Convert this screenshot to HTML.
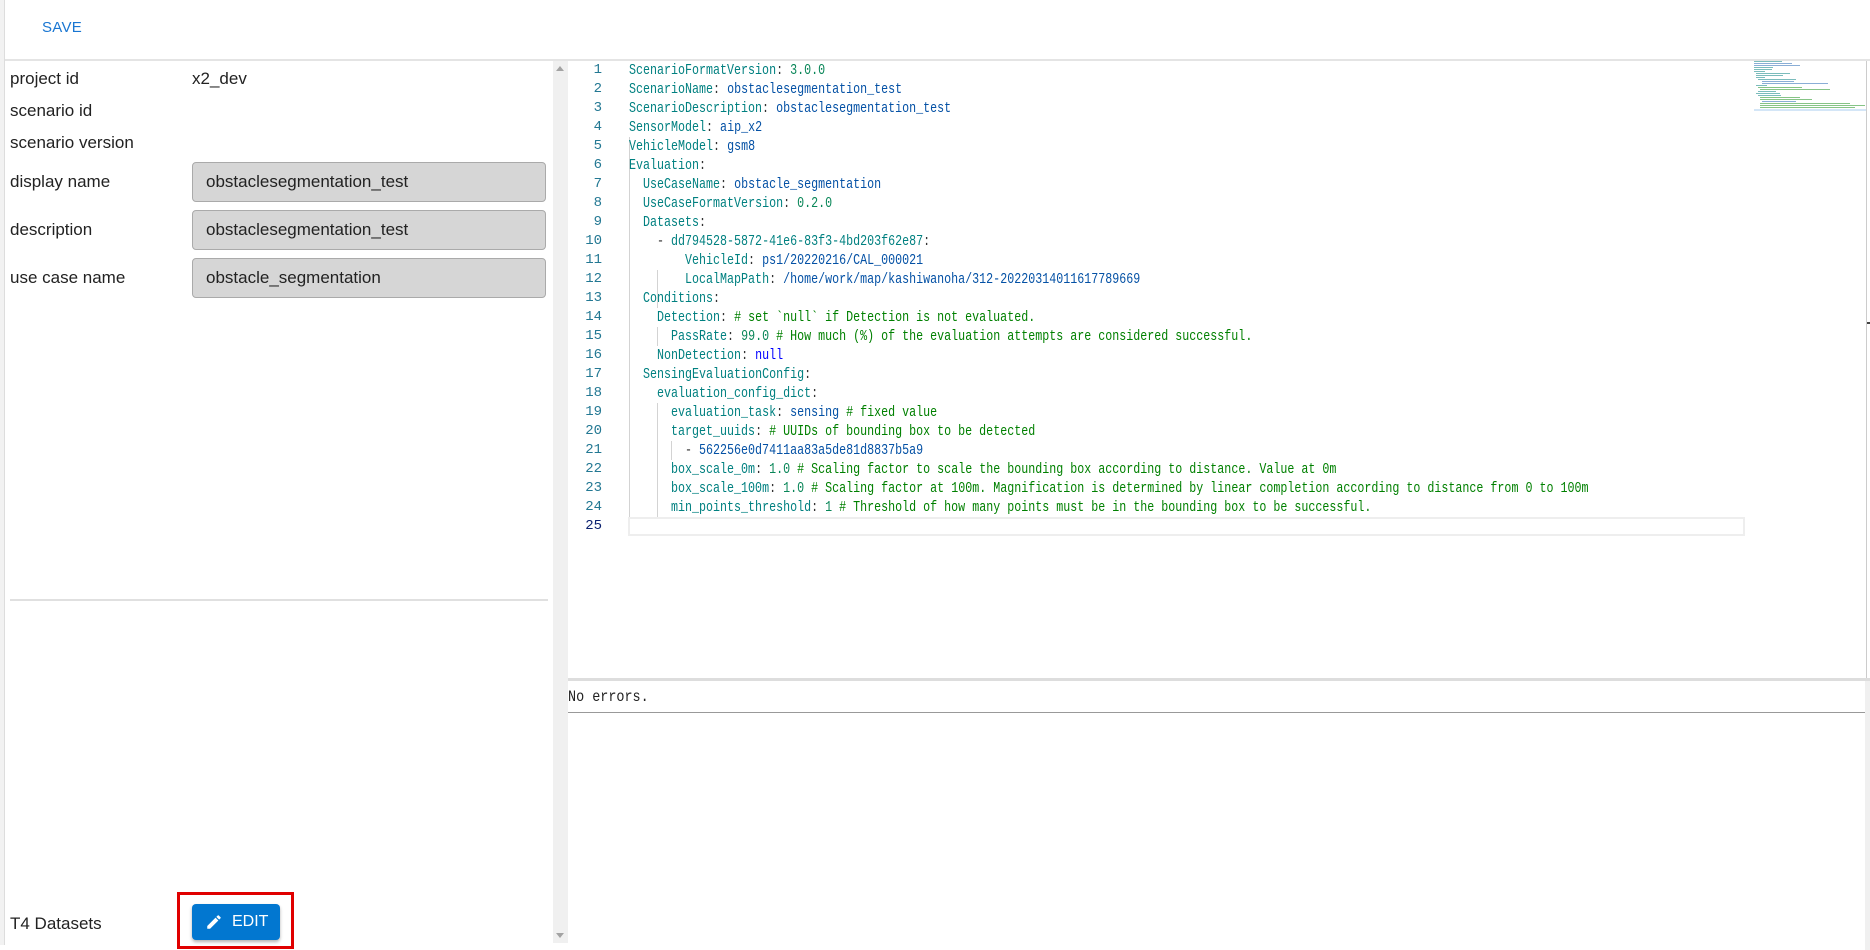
<!DOCTYPE html>
<html><head><meta charset="utf-8"><style>
*{margin:0;padding:0;box-sizing:border-box}
body{width:1870px;height:950px;position:relative;background:#fff;overflow:hidden;font-family:"Liberation Sans",sans-serif;color:#222}
.a{position:absolute}
.lbl{position:absolute;left:10px;font-size:17px;color:#222;line-height:20px}
.inp{position:absolute;left:192px;width:354px;height:40px;background:#d6d6d6;border:1px solid #aaa;border-radius:4px;font-size:17px;padding-left:13px;line-height:38px;color:#222}
.code{position:absolute;left:629px;top:61px;font-family:"Liberation Mono",monospace;font-size:15px;line-height:19px;white-space:pre;transform:scaleX(0.778);transform-origin:0 0;color:#333}
.ln{position:absolute;left:570px;width:32px;top:61px;text-align:right;font-family:"Liberation Mono",monospace;font-size:14px;line-height:19px;color:#237893;white-space:pre}
.k{color:#008080}.s{color:#0451a5}.n{color:#098658}.c{color:#008000}.b{color:#0000ff}
.g{position:absolute;width:1px;background:#d3d3d3}
.mm div{position:absolute;height:1px}
</style></head><body>
<div class="a" style="left:0;top:0;width:4px;height:945px;background:#f2f2f2"></div>
<div class="a" style="left:4px;top:0;width:1px;height:945px;background:#ddd"></div>
<div class="a" style="left:42px;top:19px;font-size:15px;color:#1976d2;letter-spacing:0.3px">SAVE</div>
<div class="a" style="left:5px;top:59px;width:1865px;height:2px;background:#e4e4e4"></div>

<div class="lbl" style="top:69px">project id</div>
<div class="a" style="left:192px;top:69px;font-size:17px;line-height:20px">x2_dev</div>
<div class="lbl" style="top:101px">scenario id</div>
<div class="lbl" style="top:133px">scenario version</div>
<div class="lbl" style="top:172px">display name</div>
<div class="inp" style="top:162px">obstaclesegmentation_test</div>
<div class="lbl" style="top:220px">description</div>
<div class="inp" style="top:210px">obstaclesegmentation_test</div>
<div class="lbl" style="top:268px">use case name</div>
<div class="inp" style="top:258px">obstacle_segmentation</div>
<div class="a" style="left:10px;top:599px;width:538px;height:2px;background:#e0e0e0"></div>
<div class="lbl" style="top:914px">T4 Datasets</div>
<div class="a" style="left:177px;top:892px;width:117px;height:57px;border:3px solid #e00000"></div>
<div class="a" style="left:192px;top:904px;width:88px;height:36px;background:#0277d0;border-radius:4px;box-shadow:0 2px 3px rgba(0,0,0,.3);color:#fff;font-size:16px;line-height:36px">
<svg class="a" style="left:13px;top:9px" width="18" height="18" viewBox="0 0 24 24"><path fill="#fff" d="M3 17.25V21h3.75L17.81 9.94l-3.75-3.75L3 17.25zM20.71 7.04a1 1 0 0 0 0-1.41l-2.34-2.34a1 1 0 0 0-1.41 0l-1.83 1.83 3.75 3.75 1.83-1.83z"/></svg>
<span class="a" style="left:40px;top:0">EDIT</span></div>

<div class="a" style="left:553px;top:61px;width:15px;height:882px;background:#f0f0f0"></div>
<div class="a" style="left:556px;top:66px;width:0;height:0;border-left:4px solid transparent;border-right:4px solid transparent;border-bottom:5px solid #a3a3a3"></div>
<div class="a" style="left:556px;top:933px;width:0;height:0;border-left:4px solid transparent;border-right:4px solid transparent;border-top:5px solid #a3a3a3"></div>

<div class="a" style="left:628px;top:517px;width:1117px;height:19px;border:2px solid #eee"></div>
<div class="g" style="left:629px;top:137px;height:380px"></div>
<div class="g" style="left:657px;top:270px;height:38px"></div>
<div class="g" style="left:657px;top:327px;height:19px"></div>
<div class="g" style="left:657px;top:403px;height:114px"></div>
<div class="g" style="left:671px;top:441px;height:19px"></div>
<div class="ln">1
2
3
4
5
6
7
8
9
10
11
12
13
14
15
16
17
18
19
20
21
22
23
24
<span style="color:#0b216f">25</span></div>
<div class="code"><span class="k">ScenarioFormatVersion</span>: <span class="n">3.0.0</span>
<span class="k">ScenarioName</span>: <span class="s">obstaclesegmentation_test</span>
<span class="k">ScenarioDescription</span>: <span class="s">obstaclesegmentation_test</span>
<span class="k">SensorModel</span>: <span class="s">aip_x2</span>
<span class="k">VehicleModel</span>: <span class="s">gsm8</span>
<span class="k">Evaluation</span>:
  <span class="k">UseCaseName</span>: <span class="s">obstacle_segmentation</span>
  <span class="k">UseCaseFormatVersion</span>: <span class="n">0.2.0</span>
  <span class="k">Datasets</span>:
    - <span class="k">dd794528-5872-41e6-83f3-4bd203f62e87</span>:
        <span class="k">VehicleId</span>: <span class="s">ps1/20220216/CAL_000021</span>
        <span class="k">LocalMapPath</span>: <span class="s">/home/work/map/kashiwanoha/312-20220314011617789669</span>
  <span class="k">Conditions</span>:
    <span class="k">Detection</span>: <span class="c"># set `null` if Detection is not evaluated.</span>
      <span class="k">PassRate</span>: <span class="n">99.0</span> <span class="c"># How much (%) of the evaluation attempts are considered successful.</span>
    <span class="k">NonDetection</span>: <span class="b">null</span>
  <span class="k">SensingEvaluationConfig</span>:
    <span class="k">evaluation_config_dict</span>:
      <span class="k">evaluation_task</span>: <span class="s">sensing</span> <span class="c"># fixed value</span>
      <span class="k">target_uuids</span>: <span class="c"># UUIDs of bounding box to be detected</span>
        - <span class="s">562256e0d7411aa83a5de81d8837b5a9</span>
      <span class="k">box_scale_0m</span>: <span class="n">1.0</span> <span class="c"># Scaling factor to scale the bounding box according to distance. Value at 0m</span>
      <span class="k">box_scale_100m</span>: <span class="n">1.0</span> <span class="c"># Scaling factor at 100m. Magnification is determined by linear completion according to distance from 0 to 100m</span>
      <span class="k">min_points_threshold</span>: <span class="n">1</span> <span class="c"># Threshold of how many points must be in the bounding box to be successful.</span>
</div>

<div class="mm">
<div style="left:1754px;top:61px;width:28px;background:#7bbcbc"></div>
<div style="left:1754px;top:63px;width:38px;background:#8aaed6"></div>
<div style="left:1754px;top:65px;width:46px;background:#8aaed6"></div>
<div style="left:1754px;top:67px;width:19px;background:#7bbcbc"></div>
<div style="left:1754px;top:69px;width:18px;background:#7bbcbc"></div>
<div style="left:1754px;top:71px;width:11px;background:#7bbcbc"></div>
<div style="left:1756px;top:73px;width:34px;background:#7bbcbc"></div>
<div style="left:1756px;top:75px;width:27px;background:#7bbcbc"></div>
<div style="left:1756px;top:77px;width:9px;background:#7bbcbc"></div>
<div style="left:1758px;top:79px;width:38px;background:#7bbcbc"></div>
<div style="left:1762px;top:81px;width:32px;background:#8aaed6"></div>
<div style="left:1762px;top:83px;width:66px;background:#8aaed6"></div>
<div style="left:1756px;top:85px;width:11px;background:#7bbcbc"></div>
<div style="left:1758px;top:87px;width:44px;background:#86c486"></div>
<div style="left:1760px;top:89px;width:70px;background:#86c486"></div>
<div style="left:1758px;top:91px;width:18px;background:#7bbcbc"></div>
<div style="left:1756px;top:93px;width:24px;background:#7bbcbc"></div>
<div style="left:1758px;top:95px;width:23px;background:#7bbcbc"></div>
<div style="left:1760px;top:97px;width:40px;background:#86c486"></div>
<div style="left:1760px;top:99px;width:52px;background:#86c486"></div>
<div style="left:1762px;top:101px;width:34px;background:#8aaed6"></div>
<div style="left:1760px;top:103px;width:90px;background:#86c486"></div>
<div style="left:1760px;top:105px;width:105px;background:#86c486"></div>
<div style="left:1760px;top:107px;width:95px;background:#86c486"></div>
<div style="left:1754px;top:109px;width:112px;height:2px;background:#d4e6f7"></div>
</div>
<div class="a" style="left:1866px;top:61px;width:1px;height:618px;background:#ccc"></div>
<div class="a" style="left:1867px;top:322px;width:3px;height:2px;background:#444"></div>

<div class="a" style="left:568px;top:678px;width:1302px;height:3px;background:#ddd"></div>
<div class="a" style="left:568px;top:687px;font-family:'Liberation Mono',monospace;font-size:16px;line-height:20px;color:#222;transform:scaleX(0.84);transform-origin:0 0">No errors.</div>
<div class="a" style="left:568px;top:712px;width:1297px;height:1px;background:#999"></div>
<div class="a" style="left:1865px;top:681px;width:5px;height:269px;background:#f0f0f0"></div>
</body></html>
